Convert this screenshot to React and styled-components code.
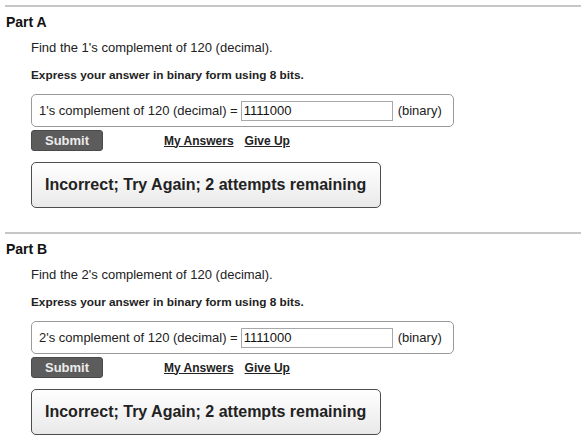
import React, { useState } from "react"
import styled, { createGlobalStyle } from "styled-components"

const GlobalStyle = createGlobalStyle`
  html, body {
    margin: 0;
    padding: 0;
    background: #fff;
  }
  body {
    font-family: "Liberation Sans", Arial, Helvetica, sans-serif;
    color: #222;
    width: 581px;
    height: 440px;
    overflow: hidden;
  }
`

const Page = styled.div`
  padding-top: 5px;
`

const Section = styled.section`
  margin-left: 5px;
  border-top: 2px solid #c6c6c6;
  padding-bottom: 24px;
`

const PartTitle = styled.h2`
  margin: 7px 0 0 1px;
  font-size: 14px;
  line-height: 16px;
  font-weight: bold;
  color: #111;
`

const Body = styled.div`
  margin-left: 26px;
`

const Prompt = styled.p`
  margin: ${({ $top }) => $top}px 0 0;
  font-size: ${({ $bold }) => ($bold ? "11.8px" : "13px")};
  line-height: 14px;
  font-weight: ${({ $bold }) => ($bold ? "bold" : "normal")};
  color: #222;
`

const AnswerBox = styled.div`
  margin-top: 12px;
  width: 423px;
  height: 33px;
  box-sizing: border-box;
  border: 1px solid #9a9a9a;
  border-radius: 5px;
  display: flex;
  align-items: center;
  padding-left: 7px;
  font-size: 13px;
  color: #222;
`

const AnswerInput = styled.input`
  margin-left: 3px;
  width: 152px;
  height: 20px;
  box-sizing: border-box;
  border: 1px solid #a8a8a8;
  padding: 0 2px;
  font-family: "Liberation Sans", Arial, sans-serif;
  font-size: 13px;
  color: #111;
  outline: none;
`

const Unit = styled.span`
  margin-left: 5px;
`

const ActionRow = styled.div`
  margin-top: 3px;
  display: flex;
  align-items: center;
`

const SubmitButton = styled.button`
  width: 72px;
  height: 21px;
  box-sizing: border-box;
  border: 1px solid #4a4a4a;
  border-radius: 3px;
  background: #5c5c5c;
  color: #ececec;
  font-family: "Liberation Sans", Arial, sans-serif;
  font-size: 13px;
  font-weight: bold;
  padding: 0;
  cursor: pointer;
`

const Links = styled.div`
  margin-left: 61px;
  display: flex;
  gap: 11px;
`

const TextLink = styled.a`
  font-size: 12px;
  font-weight: bold;
  color: #222;
  text-decoration: underline;
  cursor: pointer;
`

const Feedback = styled.div`
  margin-top: 11px;
  width: 350px;
  height: 46px;
  box-sizing: border-box;
  border: 1px solid #4d4d4d;
  border-radius: 5px;
  background: linear-gradient(#ffffff, #e9e9e9);
  display: flex;
  align-items: center;
  padding-left: 13px;
  font-size: 16px;
  font-weight: bold;
  color: #222;
`

const Part = ({ title, order, initial }) => {
  const [value, setValue] = useState(initial)
  return (
    <Section>
      <PartTitle>{title}</PartTitle>
      <Body>
        <Prompt $top={11}>Find the {order} complement of 120 (decimal).</Prompt>
        <Prompt $top={13} $bold>
          Express your answer in binary form using 8 bits.
        </Prompt>
        <AnswerBox>
          {order} complement of 120 (decimal) =
          <AnswerInput value={value} onChange={(e) => setValue(e.target.value)} />
          <Unit>(binary)</Unit>
        </AnswerBox>
        <ActionRow>
          <SubmitButton>Submit</SubmitButton>
          <Links>
            <TextLink>My Answers</TextLink>
            <TextLink>Give Up</TextLink>
          </Links>
        </ActionRow>
        <Feedback>Incorrect; Try Again; 2 attempts remaining</Feedback>
      </Body>
    </Section>
  )
}

export default function App() {
  return (
    <Page>
      <GlobalStyle />
      <Part title="Part A" order="1's" initial="1111000" />
      <Part title="Part B" order="2's" initial="1111000" />
    </Page>
  )
}
